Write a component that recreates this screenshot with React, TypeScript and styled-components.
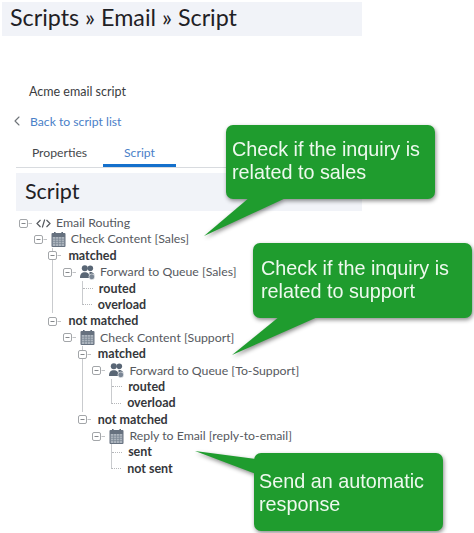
import React from 'react';
import styled, { createGlobalStyle } from 'styled-components';
import { ChevronLeft } from 'lucide-react';

const GlobalStyle = createGlobalStyle`
  html, body {
    margin: 0;
    padding: 0;
    background: #fff;
  }
  body {
    width: 474px;
    height: 533px;
    overflow: hidden;
    font-family: Lato, "Noto Sans", sans-serif;
  }
`;

const Page = styled.div`
  position: relative;
  width: 474px;
  height: 533px;
  padding-top: 2px;
  box-sizing: border-box;
`;

const PageHeading = styled.h1`
  width: 352px;
  height: 34px;
  margin: 0 0 0 2px;
  padding-left: 8px;
  background: #f1f3f8;
  color: #1f2125;
  font-size: 23.3px;
  font-weight: 400;
  line-height: 30px;
`;

const ScriptName = styled.div`
  margin: 48px 0 0 29px;
  height: 16px;
  color: #3a3c40;
  font-size: 12.5px;
  line-height: 16px;
`;

const BackLink = styled.a`
  display: flex;
  align-items: center;
  height: 16px;
  margin: 13px 0 0 9px;
  color: #4a80c8;
  font-size: 12.2px;
  svg {
    width: 16px;
    height: 18px;
    margin-right: 5px;
    color: #6e7378;
  }
`;

const Tabs = styled.div`
  display: flex;
  width: 410px;
  height: 29px;
  margin: 10px 0 0 16px;
  border-bottom: 1px solid #d8dbdf;
  box-sizing: border-box;
`;

const Tab = styled.div<{ $active?: boolean; $width: number }>`
  width: ${(p) => p.$width}px;
  height: 28px;
  box-sizing: border-box;
  text-align: center;
  color: ${(p) => (p.$active ? '#4a80c8' : '#45474b')};
  border-bottom: 3px solid ${(p) => (p.$active ? '#1470cc' : 'transparent')};
  font-size: 12.2px;
  line-height: 27px;
`;

const SectionBar = styled.h2`
  height: 38px;
  margin: 5px 0 0 16px;
  width: 337px;
  padding-left: 9px;
  background: #f1f3f8;
  color: #1f2125;
  font-size: 21.5px;
  font-weight: 400;
  line-height: 36px;
`;

const Tree = styled.ul`
  list-style: none;
  margin: 4px 0 0;
  padding: 0 0 0 23px;
`;

const ChildList = styled.ul`
  list-style: none;
  margin: 0;
  padding: 0 0 0 13.7px;
`;

const Item = styled.li<{ $guide?: boolean }>`
  border-left: 1px solid ${(p) => (p.$guide ? '#c9cbce' : 'transparent')};
`;

const Row = styled.div`
  display: flex;
  align-items: center;
  height: 16.4px;
  margin-left: -5px;
`;

const LeafRow = styled.div`
  display: flex;
  height: 16.4px;
`;

const Tick = styled.span<{ $last?: boolean }>`
  width: 10px;
  height: 8.5px;
  margin-left: ${(p) => (p.$last ? '-1px' : '0')};
  box-sizing: border-box;
  border-bottom: 1px dotted #b5b7ba;
  border-left: ${(p) => (p.$last ? '1px solid #c9cbce' : '0')};
`;

const Label = styled.span<{ $bold?: boolean }>`
  margin-left: ${(p) => (p.$bold ? '7px' : '5px')};
  color: ${(p) => (p.$bold ? '#35373b' : '#56595e')};
  font-size: ${(p) => (p.$bold ? '12.5px' : '12.3px')};
  font-weight: ${(p) => (p.$bold ? 700 : 400)};
  line-height: 16.4px;
  white-space: nowrap;
`;

const LeafLabel = styled(Label)`
  margin-left: 6px;
`;

const IconBox = styled.svg`
  flex: none;
  width: 15px;
  height: 15px;
  margin-left: 4px;
`;

const ExpanderIcon = styled.svg`
  flex: none;
  width: 13px;
  height: 9px;
`;

const Callout = styled.div<{ $top: number; $left: number; $width: number; $height: number }>`
  position: absolute;
  top: ${(p) => p.$top}px;
  left: ${(p) => p.$left}px;
  width: ${(p) => p.$width}px;
  height: ${(p) => p.$height}px;
  filter: drop-shadow(1px 2px 2px rgba(0, 0, 0, 0.45));
`;

const CalloutBody = styled.div<{ $padTop: number; $padLeft: number }>`
  position: relative;
  box-sizing: border-box;
  height: 100%;
  padding: ${(p) => p.$padTop}px 0 0 ${(p) => p.$padLeft}px;
  border-radius: 7px;
  background: #1f9c2e;
  color: #eef9ee;
  font-family: "Liberation Sans", Arial, sans-serif;
  font-size: 19.8px;
  line-height: 22.6px;
`;

const Tail = styled.svg`
  position: absolute;
  top: 0;
  left: 0;
  overflow: visible;
`;

type IconKind = 'code' | 'calendar' | 'queue';

type TreeNode = {
  label: string;
  icon?: IconKind;
  leaves?: string[];
  children?: TreeNode[];
};

const script: TreeNode = {
  label: 'Email Routing',
  icon: 'code',
  children: [
    {
      label: 'Check Content [Sales]',
      icon: 'calendar',
      children: [
        {
          label: 'matched',
          children: [
            { label: 'Forward to Queue [Sales]', icon: 'queue', leaves: ['routed', 'overload'] },
          ],
        },
        {
          label: 'not matched',
          children: [
            {
              label: 'Check Content [Support]',
              icon: 'calendar',
              children: [
                {
                  label: 'matched',
                  children: [
                    { label: 'Forward to Queue [To-Support]', icon: 'queue', leaves: ['routed', 'overload'] },
                  ],
                },
                {
                  label: 'not matched',
                  children: [
                    { label: 'Reply to Email [reply-to-email]', icon: 'calendar', leaves: ['sent', 'not sent'] },
                  ],
                },
              ],
            },
          ],
        },
      ],
    },
  ],
};

const Expander = () => (
  <ExpanderIcon viewBox="0 0 13 9">
    <rect x="0.5" y="0.5" width="8" height="8" rx="1.5" fill="#fff" stroke="#a3a6a9" />
    <path d="M2.5 4.5h4" stroke="#85888c" />
    <path d="M9.5 4.5h3.5" stroke="#c0c2c5" />
  </ExpanderIcon>
);

const NodeIcon = ({ kind }: { kind: IconKind }) => {
  if (kind === 'code') {
    return (
      <IconBox viewBox="0 0 15 15" fill="none" stroke="#55595e" strokeWidth="1.2">
        <path d="M4.5 4 1 7.5 4.5 11M10.5 4 14 7.5 10.5 11M8.7 3.5 6.3 11.5" />
      </IconBox>
    );
  }
  if (kind === 'calendar') {
    return (
      <IconBox viewBox="0 0 15 15">
        <path d="M3 0h1.6v2H3zM10.4 0H12v2h-1.6z" fill="#5c6876" />
        <rect x="0.5" y="1" width="14" height="14" rx="1" fill="#66717f" />
        <path d="M1.7 5h11.6v9H1.7z" fill="#aeb6bf" />
        <path d="M1.7 7.2h11.6M1.7 9.4h11.6M1.7 11.6h11.6M4.6 5v9M7.5 5v9M10.4 5v9" stroke="#7b8693" strokeWidth="0.7" />
      </IconBox>
    );
  }
  return (
    <IconBox viewBox="0 0 15 15" fill="#596675">
      <circle cx="4.8" cy="3.2" r="3" />
      <path d="M0 13c0-4 1.7-5.7 4.8-5.7s4.8 1.7 4.8 5.7z" />
      <circle cx="10.3" cy="3.2" r="2.8" />
      <path d="M9.5 6.8c2.8 0 4.4 1.2 5 3.4h-5z" />
      <circle cx="11.8" cy="11.8" r="2.9" fill="#7a8695" stroke="#fff" strokeWidth="0.6" />
    </IconBox>
  );
};

const Leaves = ({ names }: { names: string[] }) => (
  <ChildList>
    {names.map((name, index) => {
      const last = index === names.length - 1;
      return (
        <Item key={name} $guide={!last}>
          <LeafRow>
            <Tick $last={last} />
            <LeafLabel $bold>{name}</LeafLabel>
          </LeafRow>
        </Item>
      );
    })}
  </ChildList>
);

const TreeBranch = ({ node, guide }: { node: TreeNode; guide?: boolean }) => (
  <Item $guide={guide}>
    <Row>
      <Expander />
      {node.icon && <NodeIcon kind={node.icon} />}
      <Label $bold={!node.icon}>{node.label}</Label>
    </Row>
    {node.leaves && <Leaves names={node.leaves} />}
    {node.children && (
      <ChildList>
        {node.children.map((child, index) => (
          <TreeBranch
            key={child.label}
            node={child}
            guide={index < node.children!.length - 1}
          />
        ))}
      </ChildList>
    )}
  </Item>
);

const App = () => (
  <Page>
    <GlobalStyle />
    <PageHeading>Scripts » Email » Script</PageHeading>
    <ScriptName>Acme email script</ScriptName>
    <BackLink>
      <ChevronLeft strokeWidth={1.6} />
      Back to script list
    </BackLink>
    <Tabs>
      <Tab $width={87}>Properties</Tab>
      <Tab $width={73} $active>
        Script
      </Tab>
    </Tabs>
    <SectionBar>Script</SectionBar>
    <Tree>
      <TreeBranch node={script} />
    </Tree>

    <Callout $top={125} $left={226} $width={209} $height={74}>
      <Tail width="209" height="74">
        <path d="M24 72 -22 111 62 72z" fill="#1f9c2e" />
      </Tail>
      <CalloutBody $padTop={13} $padLeft={6}>
        Check if the inquiry is
        <br />
        related to sales
      </CalloutBody>
    </Callout>
    <Callout $top={243} $left={253} $width={219} $height={75}>
      <Tail width="219" height="75">
        <path d="M27 73 -21 112 67 73z" fill="#1f9c2e" />
      </Tail>
      <CalloutBody $padTop={14} $padLeft={8}>
        Check if the inquiry is
        <br />
        related to support
      </CalloutBody>
    </Callout>
    <Callout $top={453} $left={254} $width={189} $height={78}>
      <Tail width="189" height="78">
        <path d="M2 6 -59 -2 2 21z" fill="#1f9c2e" />
      </Tail>
      <CalloutBody $padTop={17} $padLeft={5}>
        Send an automatic
        <br />
        response
      </CalloutBody>
    </Callout>
  </Page>
);

export default App;
